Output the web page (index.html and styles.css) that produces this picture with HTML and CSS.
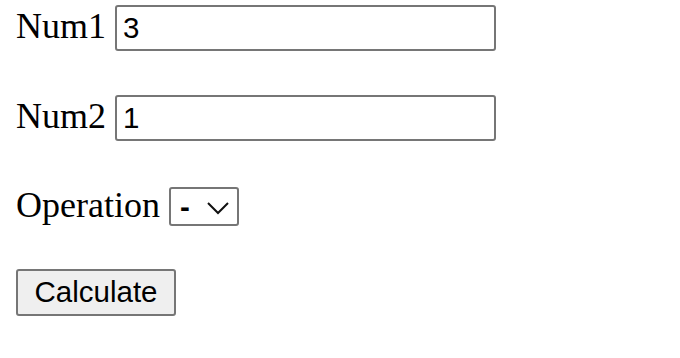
FILE: index.html
```html
<!DOCTYPE html>
<html>
<head>
<meta charset="utf-8">
<link rel="stylesheet" href="styles.css">
</head>
<body>
<form class="calc">
  <div class="row row-1">
    <label class="label" for="num1">Num1</label>
    <input class="field" id="num1" type="text" value="3">
  </div>
  <div class="row row-2">
    <label class="label" for="num2">Num2</label>
    <input class="field" id="num2" type="text" value="1">
  </div>
  <div class="row row-3">
    <label class="label" for="op">Operation</label>
    <span class="select-wrap">
      <select class="select" id="op">
        <option>+</option>
        <option selected>-</option>
        <option>*</option>
        <option>/</option>
      </select>
      <svg class="chevron" width="24" height="14" viewBox="0 0 24 14"><path d="M2 2 L12 12 L22 2" fill="none" stroke="#111" stroke-width="2"/></svg>
    </span>
  </div>
  <div class="row row-4">
    <button class="button" type="button">Calculate</button>
  </div>
</form>
</body>
</html>
```

FILE: styles.css
```css
html, body {
  margin: 0;
  padding: 0;
  background: #ffffff;
}

.calc {
  display: flex;
  flex-direction: column;
  padding: 5px 0 0 16px;
  margin: 0;
}

.row {
  display: flex;
  align-items: baseline;
  gap: 9px;
}

.row-2 { margin-top: 44px; }
.row-3 { margin-top: 42.6px; }
.row-4 { margin-top: 43px; }

.label {
  font-family: "Liberation Serif", "Times New Roman", serif;
  font-size: 36px;
  color: #000;
}

.field {
  box-sizing: border-box;
  width: 381px;
  height: 46px;
  margin: 0;
  padding: 0 6px;
  border: 2px solid #767676;
  border-radius: 3px;
  font-family: "Liberation Sans", Arial, sans-serif;
  font-size: 29.5px;
  color: #000;
  background: #fff;
  outline: none;
}

.select-wrap {
  position: relative;
  display: inline-block;
}

.select {
  box-sizing: border-box;
  -webkit-appearance: none;
  appearance: none;
  width: 70px;
  height: 39px;
  margin: 0;
  padding: 0 0 0 9px;
  border: 2px solid #767676;
  border-radius: 3px;
  font-family: "Liberation Sans", Arial, sans-serif;
  font-size: 29.5px;
  font-weight: bold;
  color: #000;
  background: #fff;
  outline: none;
}

.chevron {
  position: absolute;
  left: 37px;
  top: 14px;
  pointer-events: none;
}

.button {
  box-sizing: border-box;
  width: 160px;
  height: 47px;
  margin: 0;
  padding: 0;
  border: 2px solid #767676;
  border-radius: 3px;
  background: #efefef;
  font-family: "Liberation Sans", Arial, sans-serif;
  font-size: 29.5px;
  color: #000;
}
```
